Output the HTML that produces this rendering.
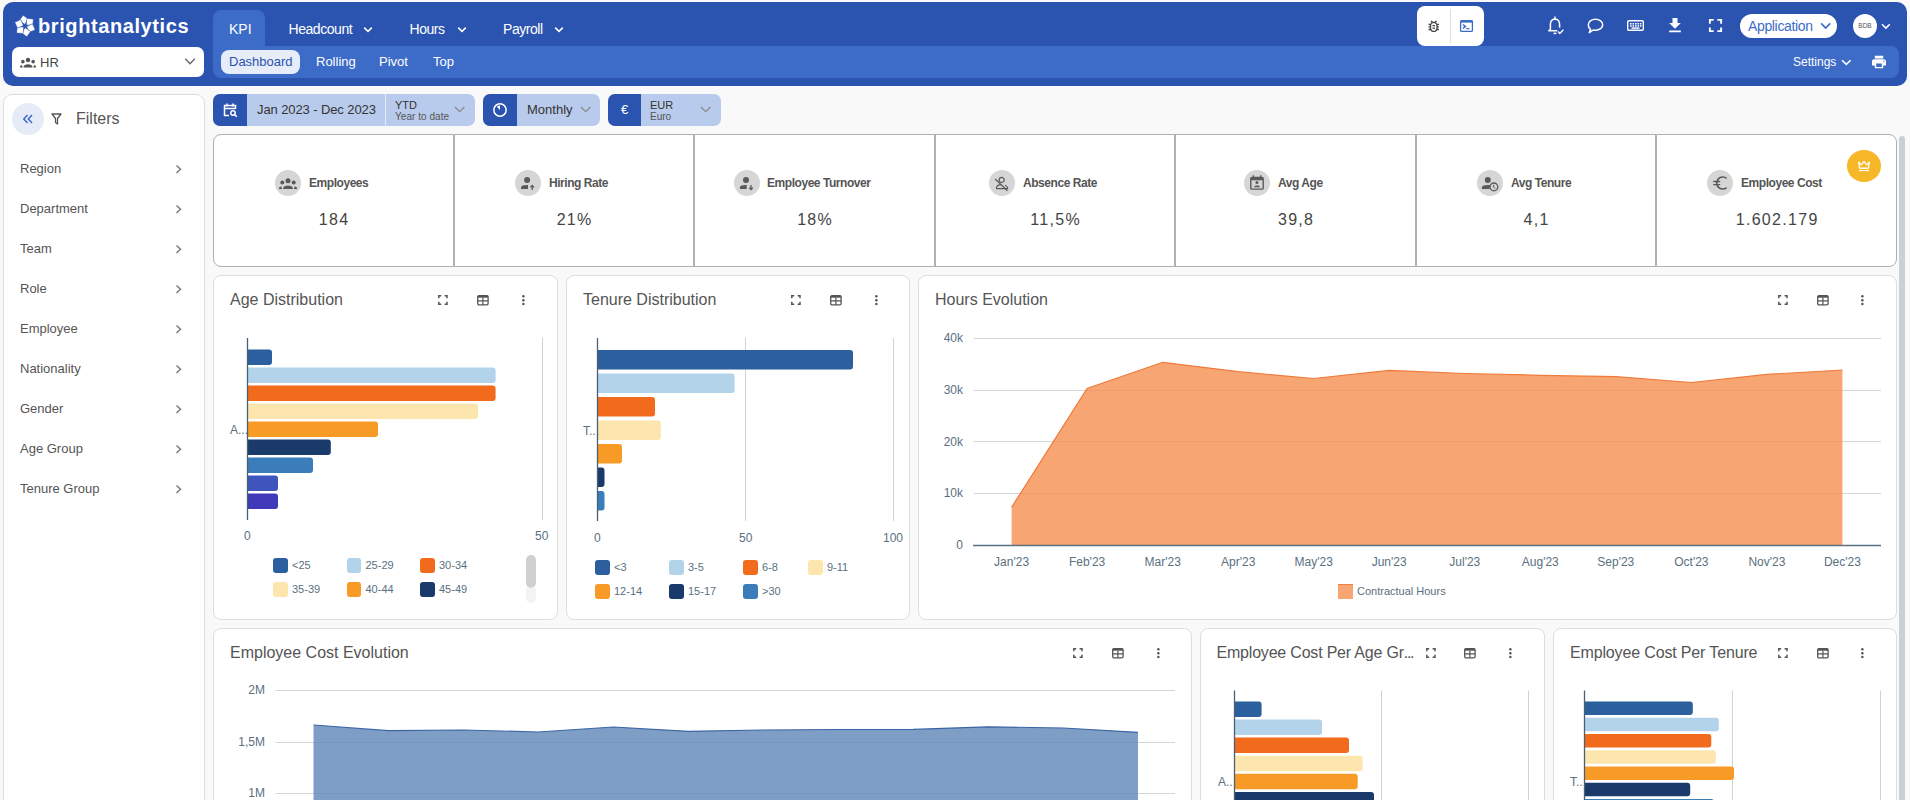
<!DOCTYPE html>
<html><head><meta charset="utf-8">
<style>
*{box-sizing:border-box;margin:0;padding:0}
html,body{width:1910px;height:800px;overflow:hidden;background:#f9f9f9;font-family:"Liberation Sans",sans-serif;color:#444}
.a{position:absolute;white-space:nowrap}
svg{position:absolute;overflow:visible}
#hdr{left:3px;top:2px;width:1904px;height:84px;background:#2b53b0;border-radius:10px}
#row2{left:213px;top:46px;width:1686px;height:32px;background:#3d6bc8;border-radius:0 8px 8px 8px}
#kpitab{left:213px;top:10px;width:52px;height:37px;background:#3d6bc8;border-radius:8px 8px 0 0}
.nav{color:#fff;font-size:14px;line-height:16px;top:21px}
.sub{color:#fff;font-size:13px;line-height:15px;top:54px}
#hrsel{left:12px;top:47px;width:192px;height:30px;background:#fff;border-radius:7px}
#filt{left:3px;top:94px;width:202px;height:720px;background:#fff;border:1px solid #dcdcdc;border-radius:9px}
.fi{left:20px;font-size:13px;line-height:15px;color:#555}
.dk{background:#2b53b0}
.lt{background:#b9cbec}
.kc{top:134px;height:133px;background:#fff;border:1px solid #b0b0b0}
.kt{font-size:12px;font-weight:bold;color:#555;line-height:14px;letter-spacing:-0.45px}
.kv{font-size:16px;color:#444;letter-spacing:1.3px;line-height:19px;text-indent:1.3px}
.kic{width:26px;height:26px;border-radius:50%;background:#d6d6d6}
.card{background:#fff;border:1px solid #dedede;border-radius:8px}
.ct{font-size:16px;color:#555;line-height:18px}
.ax{font-size:12px;color:#5a7080;line-height:14px}
.lg{font-size:11px;color:#5a7080;line-height:13px}
</style></head><body>
<!-- HEADER -->
<div id="hdr" class="a"></div>
<div id="kpitab" class="a"></div>
<div id="row2" class="a"></div>
<div class="a nav" style="left:229px">KPI</div>
<div class="a nav" style="left:288.5px;letter-spacing:-0.45px">Headcount</div>
<div class="a nav" style="left:409.5px;letter-spacing:-0.45px">Hours</div>
<div class="a nav" style="left:503px;letter-spacing:-0.45px">Payroll</div>
<svg style="left:363px;top:26px" width="10" height="8" viewBox="0 0 10 8"><path d="M1.2 1.6l3.8 3.8 3.8-3.8" fill="none" stroke="#fff" stroke-width="1.5"/></svg>
<svg style="left:456.5px;top:26px" width="10" height="8" viewBox="0 0 10 8"><path d="M1.2 1.6l3.8 3.8 3.8-3.8" fill="none" stroke="#fff" stroke-width="1.5"/></svg>
<svg style="left:553.5px;top:26px" width="10" height="8" viewBox="0 0 10 8"><path d="M1.2 1.6l3.8 3.8 3.8-3.8" fill="none" stroke="#fff" stroke-width="1.5"/></svg>
<div class="a" style="left:221px;top:50px;width:79px;height:24px;background:#e6ecf8;border-radius:8px"></div>
<div class="a sub" style="left:229px;color:#2b53b0">Dashboard</div>
<div class="a sub" style="left:316px">Rolling</div>
<div class="a sub" style="left:379px">Pivot</div>
<div class="a sub" style="left:433px">Top</div>
<div id="hrsel" class="a"></div>
<svg style="left:19px;top:53px" width="18" height="18" viewBox="-10 -10 20 20"><g fill="#555"><circle cx="0" cy="-2.2" r="2.5"/><circle cx="-5.7" cy="-0.4" r="2"/><circle cx="5.7" cy="-0.4" r="2"/><path d="M-4.9 6V5.2C-4.9 3.5-2.6 2.4 0 2.4S4.9 3.5 4.9 5.2V6z"/><path d="M-9.3 6c.2-1.4 1.1-2.4 2.6-2.8L-5.9 6z"/><path d="M9.3 6c-.2-1.4-1.1-2.4-2.6-2.8L5.9 6z"/></g></svg>
<div class="a" style="left:40px;top:55px;font-size:13px;line-height:15px;color:#444">HR</div>
<svg style="left:184px;top:57px" width="12" height="9" viewBox="0 0 12 9"><path d="M1.2 1.8l4.8 5 4.8-5" fill="none" stroke="#666" stroke-width="1.3"/></svg>
<!-- logo -->
<svg style="left:15px;top:16px" width="20" height="20" viewBox="-10 -10 20 20"><g fill="#fff" stroke="#2b53b0" stroke-width="0.6"><rect x="-3.3" y="-9.6" width="6.6" height="6.6" rx="0.6" transform="rotate(-10) rotate(45 0 -6.3)"/><rect x="-3.3" y="-9.6" width="6.6" height="6.6" rx="0.6" transform="rotate(50) rotate(45 0 -6.3)"/><rect x="-3.3" y="-9.6" width="6.6" height="6.6" rx="0.6" transform="rotate(110) rotate(45 0 -6.3)"/><rect x="-3.3" y="-9.6" width="6.6" height="6.6" rx="0.6" transform="rotate(170) rotate(45 0 -6.3)"/><rect x="-3.3" y="-9.6" width="6.6" height="6.6" rx="0.6" transform="rotate(230) rotate(45 0 -6.3)"/><rect x="-3.3" y="-9.6" width="6.6" height="6.6" rx="0.6" transform="rotate(290) rotate(45 0 -6.3)"/></g></svg>
<div class="a" style="left:38px;top:13.5px;font-size:20px;line-height:24px;font-weight:bold;color:#fff;letter-spacing:0.59px">brightanalytics</div>
<!-- dev box -->
<div class="a" style="left:1417px;top:6px;width:67px;height:40px;background:#fff;border-radius:8px"></div>
<div class="a" style="left:1450px;top:9px;width:1px;height:34px;background:#ddd"></div>
<svg style="left:1425.8px;top:17.6px" width="15.5" height="16.5" viewBox="0 0 24 24"><path fill="#444" d="M20 8h-2.81a5.985 5.985 0 0 0-1.82-1.96L17 4.41 15.59 3l-2.17 2.17a6.002 6.002 0 0 0-2.83 0L8.41 3 7 4.41l1.62 1.63C7.88 6.55 7.26 7.22 6.81 8H4v2h2.09c-.05.33-.09.66-.09 1v1H4v2h2v1c0 .34.04.67.09 1H4v2h2.81c1.04 1.79 2.97 3 5.19 3s4.15-1.21 5.19-3H20v-2h-2.09c.05-.33.09-.66.09-1v-1h2v-2h-2v-1c0-.34-.04-.67-.09-1H20V8zm-4 7c0 2.21-1.79 4-4 4s-4-1.79-4-4v-4c0-2.21 1.79-4 4-4s4 1.79 4 4v4zm-6-1h4v2h-4zm0-4h4v2h-4z"/></svg>
<svg style="left:1460px;top:20px" width="13" height="12" viewBox="0 0 13 12"><rect x="0.6" y="0.6" width="11.8" height="10.8" rx="1" fill="none" stroke="#3d6bc8" stroke-width="1.3"/><rect x="0.6" y="0.6" width="11.8" height="2" fill="#3d6bc8"/><path d="M3 4.5l2.4 1.9L3 8.3" fill="none" stroke="#3d6bc8" stroke-width="1.5"/><path d="M6.2 8.6h3.2" stroke="#3d6bc8" stroke-width="1.2"/></svg>

<!-- right icons -->
<svg style="left:1547px;top:16px" width="18" height="20" viewBox="0 0 18 20"><path d="M8 1v1.6" stroke="#fff" stroke-width="1.4" stroke-linecap="round"/><path d="M8 3.1c2.9.2 4.6 2.6 4.6 5.5v4.6l1.6 1.6H1.8l1.6-1.6V8.6C3.4 5.7 5.1 3.3 8 3.1z" fill="none" stroke="#fff" stroke-width="1.5" stroke-linejoin="round"/><path d="M6.6 17.4h2.8" stroke="#fff" stroke-width="1.5"/><rect x="10.2" y="11.6" width="8" height="8" fill="#2b53b0"/><path d="M11 15.6l1.8 1.8 3.6-3.6" fill="none" stroke="#fff" stroke-width="1.4"/></svg>
<svg style="left:1587px;top:18px" width="17" height="16" viewBox="0 0 17 16"><path d="M8.5 1.3c4.1 0 7.2 2.4 7.2 5.5s-3.1 5.5-7.2 5.5c-.8 0-1.6-.1-2.3-.3L2.3 14.6l1.3-3.2C2.2 10.4 1.3 8.7 1.3 6.8 1.3 3.7 4.4 1.3 8.5 1.3z" fill="none" stroke="#fff" stroke-width="1.5" stroke-linejoin="round"/></svg>
<svg style="left:1627px;top:20px" width="17" height="11" viewBox="0 0 17 11"><rect x="0.7" y="0.7" width="15.6" height="9.6" rx="1.3" fill="none" stroke="#fff" stroke-width="1.4"/><g fill="#fff"><rect x="3" y="3" width="1.6" height="1.5"/><rect x="5.5" y="3" width="1.6" height="1.5"/><rect x="8" y="3" width="1.6" height="1.5"/><rect x="10.5" y="3" width="1.6" height="1.5"/><rect x="13" y="3" width="1.4" height="1.5"/><rect x="3" y="5.2" width="1.6" height="1.5"/><rect x="5.5" y="5.2" width="1.6" height="1.5"/><rect x="8" y="5.2" width="1.6" height="1.5"/><rect x="10.5" y="5.2" width="1.6" height="1.5"/><rect x="13" y="5.2" width="1.4" height="1.5"/><rect x="4.5" y="7.4" width="8" height="1.4"/></g></svg>
<svg style="left:1667px;top:18px" width="16" height="15" viewBox="3 3 18 18"><path fill="#fff" d="M19 9h-4V3H9v6H5l7 7 7-7zM5 18v2h14v-2H5z"/></svg>
<svg style="left:1708px;top:18px" width="15" height="15" viewBox="4 4 16 16"><path fill="#fff" d="M7 14H5v5h5v-2H7v-3zm-2-4h2V7h3V5H5v5zm12 7h-3v2h5v-5h-2v3zM14 5v2h3v3h2V5h-5z"/></svg>
<div class="a" style="left:1740px;top:14px;width:97px;height:24px;background:#fff;border-radius:12px"></div>
<div class="a" style="left:1748px;top:18px;font-size:14px;line-height:16px;color:#3d6bc8;letter-spacing:-0.35px">Application</div>
<svg style="left:1819.5px;top:21.5px" width="12" height="9" viewBox="0 0 12 9"><path d="M1.2 1.4l4.5 4.6 4.5-4.6" fill="none" stroke="#3d6bc8" stroke-width="1.6"/></svg>
<div class="a" style="left:1853px;top:14px;width:24px;height:24px;background:#fff;border-radius:50%"></div>
<div class="a" style="left:1853px;top:22px;width:24px;text-align:center;font-size:6.5px;line-height:8px;color:#555">BDB</div>
<svg style="left:1881px;top:22.5px" width="10" height="7" viewBox="0 0 10 7"><path d="M1 1.2l3.9 3.9 3.9-3.9" fill="none" stroke="#fff" stroke-width="1.5"/></svg>
<div class="a sub" style="left:1793px;top:55px;font-size:12px">Settings</div>
<svg style="left:1840.5px;top:58.5px" width="11" height="7" viewBox="0 0 11 7"><path d="M1 1.2l4.3 4.2 4.3-4.2" fill="none" stroke="#fff" stroke-width="1.5"/></svg>
<svg style="left:1872px;top:55px" width="14" height="14" viewBox="2 3 20 18"><path fill="#fff" d="M19 8H5c-1.66 0-3 1.340-3 3v6h4v4h12v-4h4v-6c0-1.66-1.34-3-3-3zm-3 11H8v-5h8v5zm3-7c-.55 0-1-.45-1-1s.45-1 1-1 1 .45 1 1-.45 1-1 1zm-1-9H6v4h12V3z"/></svg>

<!-- FILTER PANEL -->
<div id="filt" class="a"></div>
<div class="a" style="left:12px;top:103px;width:32px;height:32px;border-radius:50%;background:#e5ebf7"></div>
<svg style="left:22px;top:114px" width="12" height="10" viewBox="0 0 12 10"><path d="M5.5 1L1.8 5l3.7 4M10 1L6.3 5 10 9" fill="none" stroke="#3d6bc8" stroke-width="1.5"/></svg>
<svg style="left:51px;top:113px" width="11" height="12" viewBox="0 0 11 12"><path d="M1 1h9L6.5 5.5V11L4.5 9.5v-4z" fill="none" stroke="#555" stroke-width="1.3" stroke-linejoin="round"/></svg>
<div class="a" style="left:76px;top:110px;font-size:16px;line-height:18px;color:#555">Filters</div>
<div class="a fi" style="top:161px">Region</div>
<div class="a fi" style="top:201px">Department</div>
<div class="a fi" style="top:241px">Team</div>
<div class="a fi" style="top:281px">Role</div>
<div class="a fi" style="top:321px">Employee</div>
<div class="a fi" style="top:361px">Nationality</div>
<div class="a fi" style="top:401px">Gender</div>
<div class="a fi" style="top:441px">Age Group</div>
<div class="a fi" style="top:481px">Tenure Group</div>
<svg style="left:172.5px;top:162px" width="12" height="335" viewBox="0 0 12 335"><g fill="none" stroke="#777" stroke-width="1.4"><path id="chev" d="M3.5 3.5l4 3.8-4 3.8"/><use href="#chev" y="40"/><use href="#chev" y="80"/><use href="#chev" y="120"/><use href="#chev" y="160"/><use href="#chev" y="200"/><use href="#chev" y="240"/><use href="#chev" y="280"/><use href="#chev" y="320"/></g></svg>

<!-- DATE CONTROLS -->
<div class="a lt" style="left:213px;top:94px;width:262px;height:32px;border-radius:7px"></div>
<div class="a dk" style="left:213px;top:94px;width:34px;height:32px;border-radius:7px 0 0 7px"></div>
<div class="a" style="left:385px;top:94px;width:1px;height:32px;background:#fff;opacity:.6"></div>
<svg style="left:223px;top:102px" width="15" height="16" viewBox="0 0 15 16"><g fill="none" stroke="#fff" stroke-width="1.5"><path d="M6 13.5H1.5V3.5h11V7"/><path d="M1.5 6.5h11"/><path d="M4 1.5v3M10 1.5v3"/><circle cx="10" cy="11" r="2.2"/><path d="M11.6 12.6L13.8 14.8"/></g></svg>
<div class="a" style="left:257px;top:102px;font-size:13px;line-height:15px;color:#333;letter-spacing:-0.1px">Jan 2023 - Dec 2023</div>
<div class="a" style="left:395px;top:99px;font-size:11px;line-height:12px;color:#333">YTD</div>
<div class="a" style="left:395px;top:111px;font-size:10px;line-height:11px;color:#555;letter-spacing:0.05px">Year to date</div>
<svg style="left:454px;top:106px" width="12" height="8" viewBox="0 0 12 8"><path d="M1 1l4.7 4.7L10.4 1" fill="none" stroke="#888" stroke-width="1.3"/></svg>

<div class="a lt" style="left:483px;top:94px;width:117px;height:32px;border-radius:7px"></div>
<div class="a dk" style="left:483px;top:94px;width:34px;height:32px;border-radius:7px 0 0 7px"></div>
<svg style="left:492px;top:102px" width="16" height="16" viewBox="0 0 16 16"><circle cx="8" cy="8" r="6.2" fill="none" stroke="#fff" stroke-width="1.5"/><path d="M8 8V3.5A4.5 4.5 0 0 0 4.9 4.8z" fill="#fff"/></svg>
<div class="a" style="left:527px;top:102px;font-size:13px;line-height:15px;color:#333">Monthly</div>
<svg style="left:579.5px;top:106px" width="12" height="8" viewBox="0 0 12 8"><path d="M1 1l4.7 4.7L10.4 1" fill="none" stroke="#888" stroke-width="1.3"/></svg>

<div class="a lt" style="left:608px;top:94px;width:113px;height:32px;border-radius:7px"></div>
<div class="a dk" style="left:608px;top:94px;width:33px;height:32px;border-radius:7px 0 0 7px"></div>
<div class="a" style="left:608px;top:102px;width:33px;text-align:center;font-size:13px;line-height:15px;color:#fff">€</div>
<div class="a" style="left:650px;top:99px;font-size:11px;line-height:12px;color:#333">EUR</div>
<div class="a" style="left:650px;top:111px;font-size:10px;line-height:11px;color:#555">Euro</div>
<svg style="left:700px;top:106px" width="12" height="8" viewBox="0 0 12 8"><path d="M1 1l4.7 4.7L10.4 1" fill="none" stroke="#888" stroke-width="1.3"/></svg>

<!-- KPI -->
<div class="a kc" style="left:213px;width:241px;border-radius:8px 0 0 8px"></div>
<div class="a kc" style="left:454px;width:240px"></div>
<div class="a kc" style="left:694px;width:241px"></div>
<div class="a kc" style="left:935px;width:240px"></div>
<div class="a kc" style="left:1175px;width:241px"></div>
<div class="a kc" style="left:1416px;width:240px"></div>
<div class="a kc" style="left:1656px;width:241px;border-radius:0 8px 8px 0"></div>
<div class="a" style="left:1847px;top:149.7px;width:34px;height:32.3px;border-radius:50%;background:#f6b828"></div>
<svg style="left:1854px;top:156px" width="20" height="20" viewBox="-10 -10 20 20"><path d="M-5.3-3.8l2.6 2.6L0-4.5l2.7 3.3 2.6-2.6-.8 5.8h-9z" fill="none" stroke="#fff" stroke-width="1.2" stroke-linejoin="round"/><path d="M-4.5 2.4h9" stroke="#fff" stroke-width="1"/><path d="M-5.2 4.6h10.4" stroke="#fff" stroke-width="1.1"/></svg>

<div class="a kic" style="left:275px;top:170px"></div>
<div class="a kic" style="left:515px;top:170px"></div>
<div class="a kic" style="left:734px;top:170px"></div>
<div class="a kic" style="left:989px;top:170px"></div>
<div class="a kic" style="left:1244px;top:170px"></div>
<div class="a kic" style="left:1477px;top:170px"></div>
<div class="a kic" style="left:1707px;top:170px"></div>
<!-- kpi icons -->
<svg style="left:278px;top:173px" width="20" height="20" viewBox="-10 -10 20 20"><g fill="#5a5a5a"><circle cx="0" cy="-2.2" r="2.5"/><circle cx="-5.7" cy="-0.4" r="2"/><circle cx="5.7" cy="-0.4" r="2"/><path d="M-4.9 6V5.2C-4.9 3.5-2.6 2.4 0 2.4S4.9 3.5 4.9 5.2V6z"/><path d="M-9.3 6c.2-1.4 1.1-2.4 2.6-2.8L-5.9 6z"/><path d="M9.3 6c-.2-1.4-1.1-2.4-2.6-2.8L5.9 6z"/></g></svg>
<svg style="left:518px;top:173px" width="20" height="20" viewBox="-10 -10 20 20"><circle cx="-0.9" cy="-3.1" r="3" fill="#5a5a5a"/><path d="M-7 6V4.6C-7 2.8-4.6 2-1.5 2H0V6z" fill="#5a5a5a"/><path d="M4.2 7V3.2M2.4 4.4l1.8-2 1.8 2" fill="none" stroke="#5a5a5a" stroke-width="1.3"/></svg>
<svg style="left:737px;top:173px" width="20" height="20" viewBox="-10 -10 20 20"><circle cx="-1" cy="-3.1" r="3" fill="#5a5a5a"/><path d="M-7.1 6V4.6C-7.1 2.8-4.7 2.1-1.6 2.1H-0.3V6z" fill="#5a5a5a"/><path d="M4 2v4M2.3 4.6l1.8 2 1.8-2" fill="none" stroke="#5a5a5a" stroke-width="1.3"/></svg>
<svg style="left:992px;top:173px" width="20" height="20" viewBox="-10 -10 20 20"><g fill="none" stroke="#5a5a5a" stroke-width="1.2"><circle cx="-0.3" cy="-3.1" r="2.5"/><path d="M3 2.2c1.6.6 2.6 1.6 2.6 3V5.6H-5.4V4.8c0-1.8 2-3 4.6-3.1"/><path d="M-6.8-4l12.2 11.8"/></g></svg>
<svg style="left:1247px;top:173px" width="20" height="20" viewBox="-10 -10 20 20"><rect x="-6.2" y="-5.5" width="12.4" height="11.6" rx="1.2" fill="none" stroke="#5a5a5a" stroke-width="1.4"/><rect x="-6.2" y="-5.5" width="12.4" height="2.8" fill="#5a5a5a"/><path d="M-3.6-7.8v2.6M3.7-7.8v2.6" stroke="#5a5a5a" stroke-width="1.3"/><circle cx="0" cy="-0.6" r="1.5" fill="#5a5a5a"/><path d="M-3 4.3c0-1.3 1.3-1.9 3-1.9s3 .6 3 1.9z" fill="#5a5a5a"/></svg>
<svg style="left:1479.7px;top:173px" width="20" height="20" viewBox="-10 -10 20 20"><circle cx="-2.2" cy="-3.1" r="3" fill="#5a5a5a"/><path d="M-8.1 6V4.6C-8.1 2.8-5.6 2-2.5 2H0.5L-0.5 6z" fill="#5a5a5a"/><circle cx="3.9" cy="3.9" r="3.9" fill="#d6d6d6" stroke="#5a5a5a" stroke-width="1.3"/><path d="M3.6 1.8v2.4l1.6 1.3" fill="none" stroke="#5a5a5a" stroke-width="1"/></svg>
<svg style="left:1710px;top:173px" width="20" height="20" viewBox="-10 -10 20 20"><path d="M6.4-4.6A6 6 0 1 0 6.4 4.6" fill="none" stroke="#5a5a5a" stroke-width="1.6" transform="translate(0.2 0)"/><path d="M-6.8-1.5h7M-6.8 1.6h7" stroke="#5a5a5a" stroke-width="1.3"/></svg>
<div class="a kt" style="left:309px;top:176px">Employees</div>
<div class="a kt" style="left:549px;top:176px">Hiring Rate</div>
<div class="a kt" style="left:767px;top:176px">Employee Turnover</div>
<div class="a kt" style="left:1023px;top:176px">Absence Rate</div>
<div class="a kt" style="left:1278px;top:176px">Avg Age</div>
<div class="a kt" style="left:1511px;top:176px">Avg Tenure</div>
<div class="a kt" style="left:1741px;top:176px">Employee Cost</div>

<div class="a kv" style="left:213px;width:241px;top:210px;text-align:center">184</div>
<div class="a kv" style="left:454px;width:240px;top:210px;text-align:center">21%</div>
<div class="a kv" style="left:694px;width:241px;top:210px;text-align:center">18%</div>
<div class="a kv" style="left:935px;width:240px;top:210px;text-align:center">11,5%</div>
<div class="a kv" style="left:1175px;width:241px;top:210px;text-align:center">39,8</div>
<div class="a kv" style="left:1416px;width:240px;top:210px;text-align:center">4,1</div>
<div class="a kv" style="left:1656px;width:241px;top:210px;text-align:center">1.602.179</div>


<!-- CHARTS -->
<div class="a card" style="left:213px;top:275px;width:345px;height:345px"></div>
<div class="a ct" style="left:230px;top:291px">Age Distribution</div>
<svg style="left:438.4px;top:295px" width="10" height="10" viewBox="0 0 10 10"><path d="M0.8 3.2V0.8h2.4M6.6 0.8H9v2.4M9 6.8v2.4H6.6M3.2 9.2H0.8V6.8" fill="none" stroke="#555" stroke-width="1.5"/></svg>
<svg style="left:477.2px;top:294.8px" width="12" height="11" viewBox="0 0 12 11"><rect x="0.7" y="0.7" width="10.4" height="9.2" rx="1.3" fill="none" stroke="#555" stroke-width="1.3"/><rect x="0.7" y="0.7" width="10.4" height="2" fill="#555"/><path d="M0.7 5.8h10.4M5.9 2.5v7.4" stroke="#555" stroke-width="1.2"/></svg>
<svg style="left:521.65px;top:294.8px" width="3" height="11" viewBox="0 0 3 11"><circle cx="1.35" cy="1.3" r="1.25" fill="#555"/><circle cx="1.35" cy="5.2" r="1.25" fill="#555"/><circle cx="1.35" cy="9.1" r="1.25" fill="#555"/></svg>
<svg style="left:0;top:0" width="1910" height="800"><line x1="542.5" y1="338" x2="542.5" y2="520" stroke="#d2d2d2" stroke-width="1"/><path d="M247.5 349.5H269a3 3 0 0 1 3 3V362.0a3 3 0 0 1-3 3H247.5z" fill="#2b5f9e"/><path d="M247.5 367.5H492.6a3 3 0 0 1 3 3V380.0a3 3 0 0 1-3 3H247.5z" fill="#b3d3ea"/><path d="M247.5 385.5H492.6a3 3 0 0 1 3 3V398.0a3 3 0 0 1-3 3H247.5z" fill="#f26b1d"/><path d="M247.5 403.5H475a3 3 0 0 1 3 3V416.0a3 3 0 0 1-3 3H247.5z" fill="#fde6ad"/><path d="M247.5 421.5H375a3 3 0 0 1 3 3V434.0a3 3 0 0 1-3 3H247.5z" fill="#f79a26"/><path d="M247.5 439.5H327.8a3 3 0 0 1 3 3V452.0a3 3 0 0 1-3 3H247.5z" fill="#1a3a6b"/><path d="M247.5 457.5H310a3 3 0 0 1 3 3V470.0a3 3 0 0 1-3 3H247.5z" fill="#3a7dba"/><path d="M247.5 475.5H275a3 3 0 0 1 3 3V488.0a3 3 0 0 1-3 3H247.5z" fill="#3d55bd"/><path d="M247.5 493.5H275a3 3 0 0 1 3 3V506.0a3 3 0 0 1-3 3H247.5z" fill="#4238ba"/><line x1="247.5" y1="338" x2="247.5" y2="520" stroke="#4a6070" stroke-width="1.3"/></svg>
<div class="a ax" style="left:230px;top:423px">A...</div>
<div class="a ax" style="left:244px;top:529px">0</div>
<div class="a ax" style="left:535px;top:529px">50</div>
<div class="a" style="left:273px;top:558px;width:14.5px;height:14.5px;border-radius:3px;background:#2b5f9e"></div>
<div class="a lg" style="left:292px;top:559px">&lt;25</div>
<div class="a" style="left:346.5px;top:558px;width:14.5px;height:14.5px;border-radius:3px;background:#b3d3ea"></div>
<div class="a lg" style="left:365.5px;top:559px">25-29</div>
<div class="a" style="left:420px;top:558px;width:14.5px;height:14.5px;border-radius:3px;background:#f26b1d"></div>
<div class="a lg" style="left:439px;top:559px">30-34</div>
<div class="a" style="left:273px;top:582px;width:14.5px;height:14.5px;border-radius:3px;background:#fde6ad"></div>
<div class="a lg" style="left:292px;top:583px">35-39</div>
<div class="a" style="left:346.5px;top:582px;width:14.5px;height:14.5px;border-radius:3px;background:#f79a26"></div>
<div class="a lg" style="left:365.5px;top:583px">40-44</div>
<div class="a" style="left:420px;top:582px;width:14.5px;height:14.5px;border-radius:3px;background:#1a3a6b"></div>
<div class="a lg" style="left:439px;top:583px">45-49</div>
<div class="a" style="left:526px;top:555px;width:10px;height:33px;border-radius:5px;background:#d0d0d0"></div>
<div class="a" style="left:526px;top:588px;width:10px;height:15px;border-radius:0 0 5px 5px;background:#f3f3f3"></div>
<div class="a card" style="left:566px;top:275px;width:344px;height:345px"></div>
<div class="a ct" style="left:583px;top:291px">Tenure Distribution</div>
<svg style="left:791.4px;top:295px" width="10" height="10" viewBox="0 0 10 10"><path d="M0.8 3.2V0.8h2.4M6.6 0.8H9v2.4M9 6.8v2.4H6.6M3.2 9.2H0.8V6.8" fill="none" stroke="#555" stroke-width="1.5"/></svg>
<svg style="left:830.2px;top:294.8px" width="12" height="11" viewBox="0 0 12 11"><rect x="0.7" y="0.7" width="10.4" height="9.2" rx="1.3" fill="none" stroke="#555" stroke-width="1.3"/><rect x="0.7" y="0.7" width="10.4" height="2" fill="#555"/><path d="M0.7 5.8h10.4M5.9 2.5v7.4" stroke="#555" stroke-width="1.2"/></svg>
<svg style="left:874.65px;top:294.8px" width="3" height="11" viewBox="0 0 3 11"><circle cx="1.35" cy="1.3" r="1.25" fill="#555"/><circle cx="1.35" cy="5.2" r="1.25" fill="#555"/><circle cx="1.35" cy="9.1" r="1.25" fill="#555"/></svg>
<svg style="left:0;top:0" width="1910" height="800"><line x1="745.5" y1="338" x2="745.5" y2="521" stroke="#d2d2d2" stroke-width="1"/><line x1="893.5" y1="338" x2="893.5" y2="521" stroke="#d2d2d2" stroke-width="1"/><path d="M597.5 350.0H850a3 3 0 0 1 3 3V366.5a3 3 0 0 1-3 3H597.5z" fill="#2b5f9e"/><path d="M597.5 373.5H731.6a3 3 0 0 1 3 3V390.0a3 3 0 0 1-3 3H597.5z" fill="#b3d3ea"/><path d="M597.5 397.0H652a3 3 0 0 1 3 3V413.5a3 3 0 0 1-3 3H597.5z" fill="#f26b1d"/><path d="M597.5 420.5H657.8a3 3 0 0 1 3 3V437.0a3 3 0 0 1-3 3H597.5z" fill="#fde6ad"/><path d="M597.5 444.0H619a3 3 0 0 1 3 3V460.5a3 3 0 0 1-3 3H597.5z" fill="#f79a26"/><path d="M597.5 467.5H601.5a3 3 0 0 1 3 3V484.0a3 3 0 0 1-3 3H597.5z" fill="#1a3a6b"/><path d="M597.5 491.0H601.5a3 3 0 0 1 3 3V507.5a3 3 0 0 1-3 3H597.5z" fill="#3a7dba"/><line x1="597.5" y1="338" x2="597.5" y2="521" stroke="#4a6070" stroke-width="1.3"/></svg>
<div class="a ax" style="left:583px;top:424px">T...</div>
<div class="a ax" style="left:594px;top:531px">0</div>
<div class="a ax" style="left:739px;top:531px">50</div>
<div class="a ax" style="left:883px;top:531px">100</div>
<div class="a" style="left:595px;top:560px;width:15px;height:15px;border-radius:3px;background:#2b5f9e"></div>
<div class="a lg" style="left:614px;top:561px">&lt;3</div>
<div class="a" style="left:669px;top:560px;width:15px;height:15px;border-radius:3px;background:#b3d3ea"></div>
<div class="a lg" style="left:688px;top:561px">3-5</div>
<div class="a" style="left:743px;top:560px;width:15px;height:15px;border-radius:3px;background:#f26b1d"></div>
<div class="a lg" style="left:762px;top:561px">6-8</div>
<div class="a" style="left:808px;top:560px;width:15px;height:15px;border-radius:3px;background:#fde6ad"></div>
<div class="a lg" style="left:827px;top:561px">9-11</div>
<div class="a" style="left:595px;top:584px;width:15px;height:15px;border-radius:3px;background:#f79a26"></div>
<div class="a lg" style="left:614px;top:585px">12-14</div>
<div class="a" style="left:669px;top:584px;width:15px;height:15px;border-radius:3px;background:#1a3a6b"></div>
<div class="a lg" style="left:688px;top:585px">15-17</div>
<div class="a" style="left:743px;top:584px;width:15px;height:15px;border-radius:3px;background:#3a7dba"></div>
<div class="a lg" style="left:762px;top:585px">&gt;30</div>
<div class="a card" style="left:918px;top:275px;width:979px;height:345px"></div>
<div class="a ct" style="left:935px;top:291px">Hours Evolution</div>
<svg style="left:1777.9px;top:295px" width="10" height="10" viewBox="0 0 10 10"><path d="M0.8 3.2V0.8h2.4M6.6 0.8H9v2.4M9 6.8v2.4H6.6M3.2 9.2H0.8V6.8" fill="none" stroke="#555" stroke-width="1.5"/></svg>
<svg style="left:1817.2px;top:294.8px" width="12" height="11" viewBox="0 0 12 11"><rect x="0.7" y="0.7" width="10.4" height="9.2" rx="1.3" fill="none" stroke="#555" stroke-width="1.3"/><rect x="0.7" y="0.7" width="10.4" height="2" fill="#555"/><path d="M0.7 5.8h10.4M5.9 2.5v7.4" stroke="#555" stroke-width="1.2"/></svg>
<svg style="left:1861.25px;top:294.8px" width="3" height="11" viewBox="0 0 3 11"><circle cx="1.35" cy="1.3" r="1.25" fill="#555"/><circle cx="1.35" cy="5.2" r="1.25" fill="#555"/><circle cx="1.35" cy="9.1" r="1.25" fill="#555"/></svg>
<svg style="left:0;top:0" width="1910" height="800"><line x1="974" y1="338.5" x2="1881" y2="338.5" stroke="#d6d6d6" stroke-width="1"/><line x1="974" y1="390.5" x2="1881" y2="390.5" stroke="#d6d6d6" stroke-width="1"/><line x1="974" y1="441.5" x2="1881" y2="441.5" stroke="#d6d6d6" stroke-width="1"/><line x1="974" y1="493.5" x2="1881" y2="493.5" stroke="#d6d6d6" stroke-width="1"/><polygon points="1011.6,545 1011.6,507.2 1087.1,388.4 1162.7,362.3 1238.2,371.7 1313.7,378.5 1389.2,370.4 1464.8,373.5 1540.3,375.3 1615.8,376.7 1691.4,382.5 1766.9,374.4 1842.4,370.0 1842.4,545" fill="#f48e50" fill-opacity="0.8"/><polyline points="1011.6,507.2 1087.1,388.4 1162.7,362.3 1238.2,371.7 1313.7,378.5 1389.2,370.4 1464.8,373.5 1540.3,375.3 1615.8,376.7 1691.4,382.5 1766.9,374.4 1842.4,370.0" fill="none" stroke="#ef7a3a" stroke-width="1.2"/><line x1="973" y1="545.5" x2="1881" y2="545.5" stroke="#5b7080" stroke-width="1.3"/></svg>
<div class="a ax" style="left:900px;width:63px;text-align:right;top:331.4px">40k</div>
<div class="a ax" style="left:900px;width:63px;text-align:right;top:383px">30k</div>
<div class="a ax" style="left:900px;width:63px;text-align:right;top:434.5px">20k</div>
<div class="a ax" style="left:900px;width:63px;text-align:right;top:486px">10k</div>
<div class="a ax" style="left:900px;width:63px;text-align:right;top:537.7px">0</div>
<div class="a ax" style="left:981.6px;width:60px;text-align:center;top:555px">Jan'23</div>
<div class="a ax" style="left:1057.1px;width:60px;text-align:center;top:555px">Feb'23</div>
<div class="a ax" style="left:1132.7px;width:60px;text-align:center;top:555px">Mar'23</div>
<div class="a ax" style="left:1208.2px;width:60px;text-align:center;top:555px">Apr'23</div>
<div class="a ax" style="left:1283.7px;width:60px;text-align:center;top:555px">May'23</div>
<div class="a ax" style="left:1359.2px;width:60px;text-align:center;top:555px">Jun'23</div>
<div class="a ax" style="left:1434.8px;width:60px;text-align:center;top:555px">Jul'23</div>
<div class="a ax" style="left:1510.3px;width:60px;text-align:center;top:555px">Aug'23</div>
<div class="a ax" style="left:1585.8px;width:60px;text-align:center;top:555px">Sep'23</div>
<div class="a ax" style="left:1661.4px;width:60px;text-align:center;top:555px">Oct'23</div>
<div class="a ax" style="left:1736.9px;width:60px;text-align:center;top:555px">Nov'23</div>
<div class="a ax" style="left:1812.4px;width:60px;text-align:center;top:555px">Dec'23</div>
<div class="a" style="left:1338px;top:584px;width:14.5px;height:14.5px;background:#f6a573;border-top:1.5px solid #f0823f"></div>
<div class="a lg" style="left:1357px;top:585px">Contractual Hours</div>
<div class="a card" style="left:213px;top:628px;width:979px;height:192px"></div>
<div class="a ct" style="left:230px;top:644px">Employee Cost Evolution</div>
<svg style="left:1073.4px;top:648px" width="10" height="10" viewBox="0 0 10 10"><path d="M0.8 3.2V0.8h2.4M6.6 0.8H9v2.4M9 6.8v2.4H6.6M3.2 9.2H0.8V6.8" fill="none" stroke="#555" stroke-width="1.5"/></svg>
<svg style="left:1112.2px;top:647.8px" width="12" height="11" viewBox="0 0 12 11"><rect x="0.7" y="0.7" width="10.4" height="9.2" rx="1.3" fill="none" stroke="#555" stroke-width="1.3"/><rect x="0.7" y="0.7" width="10.4" height="2" fill="#555"/><path d="M0.7 5.8h10.4M5.9 2.5v7.4" stroke="#555" stroke-width="1.2"/></svg>
<svg style="left:1156.65px;top:647.8px" width="3" height="11" viewBox="0 0 3 11"><circle cx="1.35" cy="1.3" r="1.25" fill="#555"/><circle cx="1.35" cy="5.2" r="1.25" fill="#555"/><circle cx="1.35" cy="9.1" r="1.25" fill="#555"/></svg>
<svg style="left:0;top:0" width="1910" height="800"><line x1="275.5" y1="690.5" x2="1175" y2="690.5" stroke="#d6d6d6" stroke-width="1"/><line x1="275.5" y1="742.5" x2="1175" y2="742.5" stroke="#d6d6d6" stroke-width="1"/><line x1="275.5" y1="793.5" x2="1175" y2="793.5" stroke="#d6d6d6" stroke-width="1"/><polygon points="313.5,820 313.5,725.0 388.4,730.7 463.4,730.0 538.4,732.0 613.3,727.0 688.2,731.3 763.2,730.0 838.1,729.5 913.1,729.4 988.1,726.8 1063.0,728.0 1138.0,732.3 1138.0,820" fill="#5f86b6" fill-opacity="0.8"/><polyline points="313.5,725.0 388.4,730.7 463.4,730.0 538.4,732.0 613.3,727.0 688.2,731.3 763.2,730.0 838.1,729.5 913.1,729.4 988.1,726.8 1063.0,728.0 1138.0,732.3" fill="none" stroke="#3b65a5" stroke-width="1.2"/></svg>
<div class="a ax" style="left:200px;width:65px;text-align:right;top:683.2px">2M</div>
<div class="a ax" style="left:200px;width:65px;text-align:right;top:735.3px">1,5M</div>
<div class="a ax" style="left:200px;width:65px;text-align:right;top:786px">1M</div>
<div class="a card" style="left:1200px;top:628px;width:345px;height:192px"></div>
<div class="a ct" style="left:1216.5px;top:644px"><span style="letter-spacing:-0.2px">Employee Cost Per Age Gr<span style="letter-spacing:-1.3px">...</span></span></div>
<svg style="left:1425.9px;top:648px" width="10" height="10" viewBox="0 0 10 10"><path d="M0.8 3.2V0.8h2.4M6.6 0.8H9v2.4M9 6.8v2.4H6.6M3.2 9.2H0.8V6.8" fill="none" stroke="#555" stroke-width="1.5"/></svg>
<svg style="left:1464.2px;top:647.8px" width="12" height="11" viewBox="0 0 12 11"><rect x="0.7" y="0.7" width="10.4" height="9.2" rx="1.3" fill="none" stroke="#555" stroke-width="1.3"/><rect x="0.7" y="0.7" width="10.4" height="2" fill="#555"/><path d="M0.7 5.8h10.4M5.9 2.5v7.4" stroke="#555" stroke-width="1.2"/></svg>
<svg style="left:1508.65px;top:647.8px" width="3" height="11" viewBox="0 0 3 11"><circle cx="1.35" cy="1.3" r="1.25" fill="#555"/><circle cx="1.35" cy="5.2" r="1.25" fill="#555"/><circle cx="1.35" cy="9.1" r="1.25" fill="#555"/></svg>
<svg style="left:0;top:0" width="1910" height="800"><line x1="1381.5" y1="690.5" x2="1381.5" y2="800" stroke="#d2d2d2"/><line x1="1528.5" y1="690.5" x2="1528.5" y2="800" stroke="#d2d2d2"/><path d="M1234.5 701.4H1258.6a3 3 0 0 1 3 3V713.9a3 3 0 0 1-3 3H1234.5z" fill="#2b5f9e"/><path d="M1234.5 719.5H1319a3 3 0 0 1 3 3V732.0a3 3 0 0 1-3 3H1234.5z" fill="#b3d3ea"/><path d="M1234.5 737.6H1346a3 3 0 0 1 3 3V750.1a3 3 0 0 1-3 3H1234.5z" fill="#f26b1d"/><path d="M1234.5 755.6999999999999H1359.6a3 3 0 0 1 3 3V768.1999999999999a3 3 0 0 1-3 3H1234.5z" fill="#fde6ad"/><path d="M1234.5 773.8H1354.7a3 3 0 0 1 3 3V786.3a3 3 0 0 1-3 3H1234.5z" fill="#f79a26"/><path d="M1234.5 791.9H1371a3 3 0 0 1 3 3V804.4a3 3 0 0 1-3 3H1234.5z" fill="#1a3a6b"/><line x1="1234.5" y1="690.5" x2="1234.5" y2="800" stroke="#4a6070" stroke-width="1.3"/></svg>
<div class="a ax" style="left:1218px;top:775px">A...</div>
<div class="a card" style="left:1553px;top:628px;width:344px;height:192px"></div>
<div class="a ct" style="left:1570px;top:644px"><span style="letter-spacing:-0.15px">Employee Cost Per Tenure</span></div>
<svg style="left:1778.4px;top:648px" width="10" height="10" viewBox="0 0 10 10"><path d="M0.8 3.2V0.8h2.4M6.6 0.8H9v2.4M9 6.8v2.4H6.6M3.2 9.2H0.8V6.8" fill="none" stroke="#555" stroke-width="1.5"/></svg>
<svg style="left:1817.2px;top:647.8px" width="12" height="11" viewBox="0 0 12 11"><rect x="0.7" y="0.7" width="10.4" height="9.2" rx="1.3" fill="none" stroke="#555" stroke-width="1.3"/><rect x="0.7" y="0.7" width="10.4" height="2" fill="#555"/><path d="M0.7 5.8h10.4M5.9 2.5v7.4" stroke="#555" stroke-width="1.2"/></svg>
<svg style="left:1861.45px;top:647.8px" width="3" height="11" viewBox="0 0 3 11"><circle cx="1.35" cy="1.3" r="1.25" fill="#555"/><circle cx="1.35" cy="5.2" r="1.25" fill="#555"/><circle cx="1.35" cy="9.1" r="1.25" fill="#555"/></svg>
<svg style="left:0;top:0" width="1910" height="800"><line x1="1732.5" y1="690.5" x2="1732.5" y2="800" stroke="#d2d2d2"/><line x1="1880.5" y1="690.5" x2="1880.5" y2="800" stroke="#d2d2d2"/><path d="M1584.5 701.4H1689.8a3 3 0 0 1 3 3V712.0a3 3 0 0 1-3 3H1584.5z" fill="#2b5f9e"/><path d="M1584.5 717.65H1715.8a3 3 0 0 1 3 3V728.25a3 3 0 0 1-3 3H1584.5z" fill="#b3d3ea"/><path d="M1584.5 733.9H1708.3a3 3 0 0 1 3 3V744.5a3 3 0 0 1-3 3H1584.5z" fill="#f26b1d"/><path d="M1584.5 750.15H1712.8a3 3 0 0 1 3 3V760.75a3 3 0 0 1-3 3H1584.5z" fill="#fde6ad"/><path d="M1584.5 766.4H1731a3 3 0 0 1 3 3V777.0a3 3 0 0 1-3 3H1584.5z" fill="#f79a26"/><path d="M1584.5 782.65H1687.2a3 3 0 0 1 3 3V793.25a3 3 0 0 1-3 3H1584.5z" fill="#1a3a6b"/><path d="M1584.5 798.9H1711a3 3 0 0 1 3 3V809.5a3 3 0 0 1-3 3H1584.5z" fill="#3a7dba"/><line x1="1584.5" y1="690.5" x2="1584.5" y2="800" stroke="#4a6070" stroke-width="1.3"/></svg>
<div class="a ax" style="left:1570px;top:775px">T...</div>
<!-- scrollbar -->
<div class="a" style="left:1899px;top:136px;width:6px;height:680px;background:#c8d1d8;border-radius:3px"></div>
</body></html>
